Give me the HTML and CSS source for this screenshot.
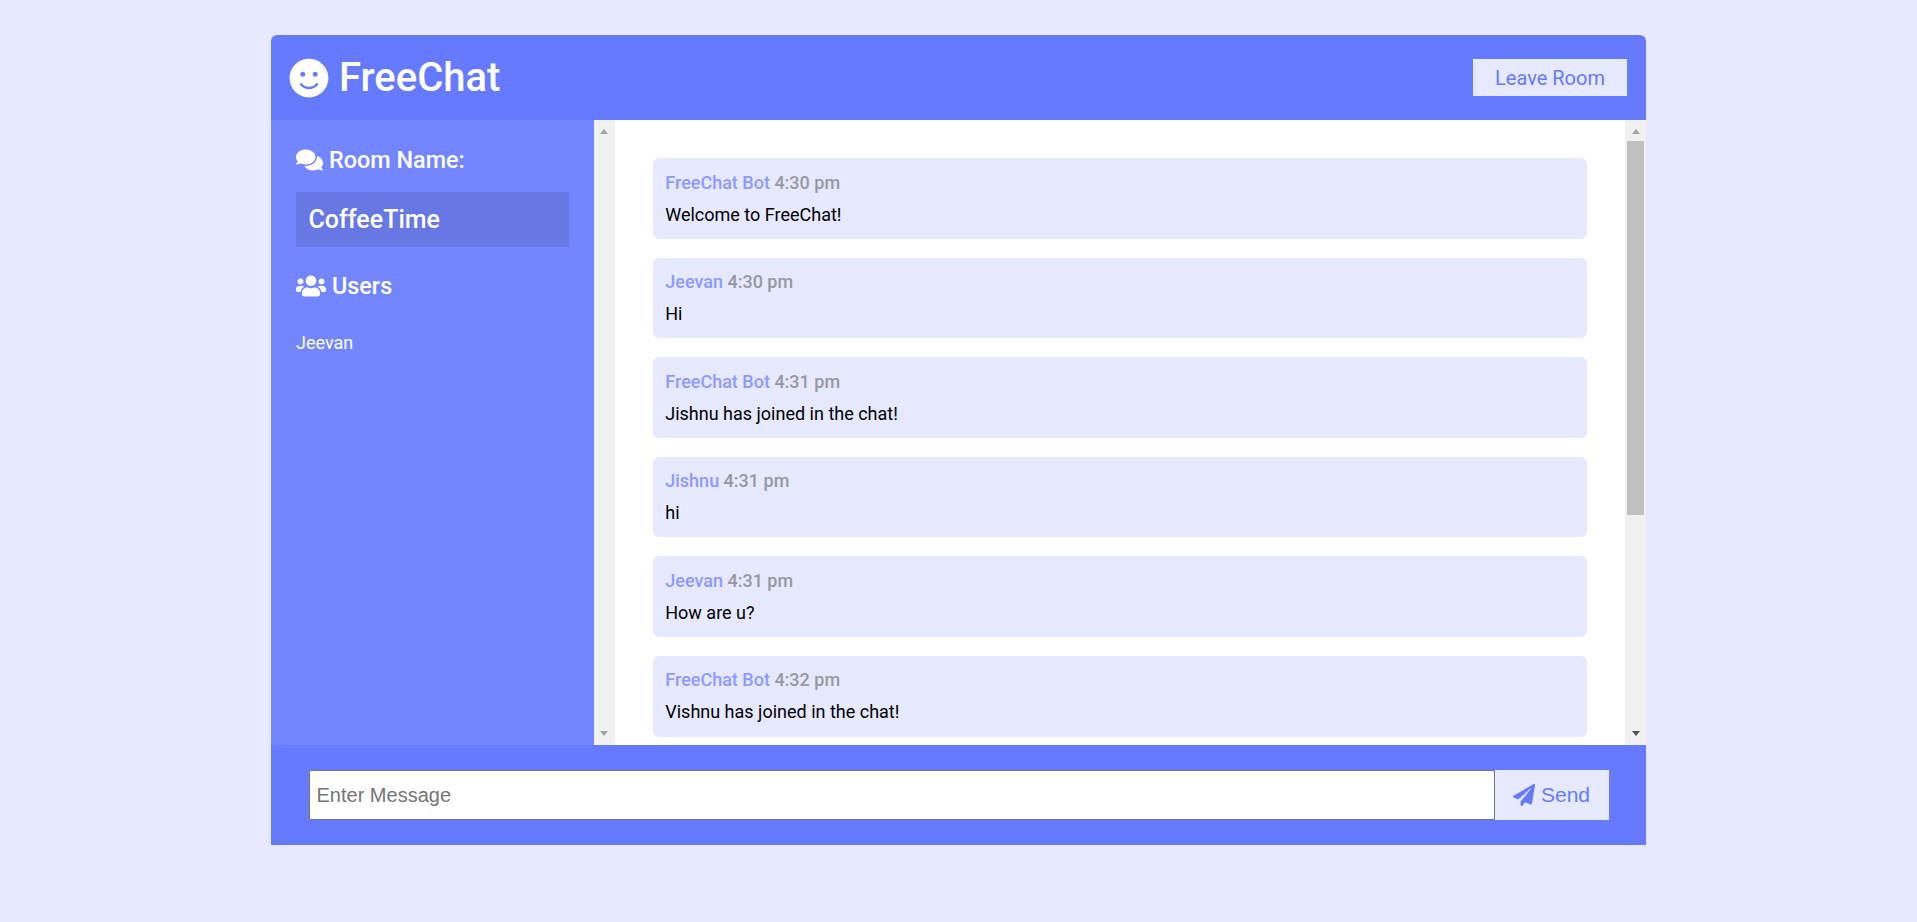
FILE: index.html
```html
<!DOCTYPE html>
<html lang="en">
<head>
<meta charset="utf-8">
<title>FreeChat</title>
<link rel="stylesheet" href="styles.css">
</head>
<body>
<div class="chat-container">
  <header class="chat-header">
    <h1 class="brand">
      <svg class="brand-icon" viewBox="0 0 496 512"><path d="M248 8C111 8 0 119 0 256s111 248 248 248 248-111 248-248S385 8 248 8zm80 168c17.7 0 32 14.3 32 32s-14.3 32-32 32-32-14.3-32-32 14.3-32 32-32zm-160 0c17.7 0 32 14.3 32 32s-14.3 32-32 32-32-14.3-32-32 14.3-32 32-32zm194.8 170.2C334.3 380.4 292.5 400 248 400s-86.3-19.6-114.8-53.8c-13.6-16.3 11-36.7 24.6-20.5 22.4 26.9 55.2 42.2 90.2 42.2s67.8-15.4 90.2-42.2c13.4-16.2 38.1 4.2 24.6 20.5z"/></svg>
      <span>FreeChat</span>
    </h1>
    <a class="btn leave-btn">Leave Room</a>
  </header>
  <main class="chat-main">
    <div class="pane sidebar-pane">
      <aside class="sidebar">
        <h3 class="side-title room-title">
          <svg class="side-icon comments" viewBox="0 0 576 512"><path d="M416 192c0-88.4-93.1-160-208-160S0 103.6 0 192c0 34.3 14.1 65.9 38 92-13.4 30.2-35.5 54.2-35.8 54.5-2.2 2.3-2.8 5.7-1.5 8.7S4.8 352 8 352c36.6 0 66.9-12.3 88.7-25 32.2 15.7 70.3 25 111.3 25 114.9 0 208-71.6 208-160zm122 220c23.9-26 38-57.7 38-92 0-66.9-53.5-124.2-129.3-148.1.9 6.6 1.3 13.3 1.3 20.1 0 105.9-107.7 192-240 192-10.8 0-21.3-.8-31.7-1.9C207.8 439.6 281.8 480 368 480c41 0 79.1-9.2 111.3-25 21.8 12.7 52.1 25 88.7 25 3.2 0 6.1-1.9 7.3-4.8 1.3-2.9.7-6.3-1.5-8.7-.3-.3-22.4-24.2-35.8-54.5z"/></svg>
          Room Name:
        </h3>
        <h2 class="room-name">CoffeeTime</h2>
        <h3 class="side-title users-title">
          <svg class="side-icon users" viewBox="0 0 640 512"><path d="M96 224c35.3 0 64-28.7 64-64s-28.7-64-64-64-64 28.7-64 64 28.7 64 64 64zm448 0c35.3 0 64-28.7 64-64s-28.7-64-64-64-64 28.7-64 64 28.7 64 64 64zm32 32h-64c-17.6 0-33.5 7.1-45.1 18.6 40.3 22.1 68.9 62 75.1 109.4h66c17.7 0 32-14.3 32-32v-32c0-35.3-28.7-64-64-64zm-256 0c61.9 0 112-50.1 112-112S381.9 32 320 32 208 82.1 208 144s50.1 112 112 112zm76.8 32h-8.3c-20.8 10-43.9 16-68.5 16s-47.6-6-68.5-16h-8.3C179.6 288 128 339.6 128 403.2V432c0 26.5 21.5 48 48 48h288c26.5 0 48-21.5 48-48v-28.8c0-63.6-51.6-115.2-115.2-115.2zm-223.7-13.4C161.5 263.1 145.6 256 128 256H64c-35.3 0-64 28.7-64 64v32c0 17.7 14.3 32 32 32h65.9c6.3-47.4 34.9-87.3 75.2-109.4z"/></svg>
          Users
        </h3>
        <ul class="user-list">
          <li>Jeevan</li>
        </ul>
      </aside>
      <div class="scrollbar">
        <span class="arrow up"></span>
        <span class="arrow down"></span>
      </div>
    </div>
    <div class="pane messages-pane">
      <section class="messages">
        <article class="message"><p class="meta">FreeChat Bot <span>4:30 pm</span></p><p class="text">Welcome to FreeChat!</p></article>
        <article class="message"><p class="meta">Jeevan <span>4:30 pm</span></p><p class="text">Hi</p></article>
        <article class="message"><p class="meta">FreeChat Bot <span>4:31 pm</span></p><p class="text">Jishnu has joined in the chat!</p></article>
        <article class="message"><p class="meta">Jishnu <span>4:31 pm</span></p><p class="text">hi</p></article>
        <article class="message"><p class="meta">Jeevan <span>4:31 pm</span></p><p class="text">How are u?</p></article>
        <article class="message"><p class="meta">FreeChat Bot <span>4:32 pm</span></p><p class="text">Vishnu has joined in the chat!</p></article>
      </section>
      <div class="scrollbar">
        <span class="arrow up"></span>
        <span class="thumb"></span>
        <span class="arrow down dark"></span>
      </div>
    </div>
  </main>
  <footer class="chat-form">
    <form class="form-row">
      <input class="msg-input" type="text" placeholder="Enter Message">
      <button class="btn send-btn" type="button">
        <svg class="send-icon" viewBox="0 0 512 512"><path d="M476 3.2L12.5 270.6c-18.1 10.4-15.8 35.6 2.2 43.2L121 358.4l287.3-253.2c5.5-4.9 13.3 2.6 8.6 8.3L176 407v80.5c0 23.6 28.5 32.9 42.5 15.8L282 426l124.6 52.2c14.2 6 30.4-2.9 33-18.2l72-432C515 7.8 493.3-6.8 476 3.2z"/></svg>
        Send
      </button>
    </form>
  </footer>
</div>
</body>
</html>
```

FILE: styles.css
```css
* { box-sizing: border-box; margin: 0; padding: 0; }

body {
  background: #e6e9ff;
  font-family: Roboto, sans-serif;
  font-size: 18px;
  padding-top: 35px;
  height: 922px;
  overflow: hidden;
}

.chat-container {
  width: 1375px;
  margin: 0 auto;
  color: #fff;
}

.chat-header {
  height: 85px;
  padding: 0 19px 0 18px;
  background: #667aff;
  border-radius: 6px 6px 0 0;
  display: flex;
  align-items: center;
  justify-content: space-between;
}

.brand {
  display: flex;
  align-items: center;
  gap: 10px;
  font-size: 40px;
  font-weight: 500;
}

.brand-icon { width: 40px; height: 40px; fill: #fff; }

.btn {
  background: #e6e9ff;
  color: #667aff;
  border: 0;
  display: flex;
  align-items: center;
  justify-content: center;
}

.leave-btn {
  width: 154px;
  height: 37px;
  font-size: 20px;
}

.chat-main {
  height: 625px;
  display: grid;
  grid-template-columns: 343.75px 1fr;
  background: #fff;
}

.pane { display: flex; min-height: 0; overflow: hidden; }

.sidebar {
  flex: 1;
  background: #7386ff;
  padding: 25px;
}

.side-title {
  display: flex;
  align-items: center;
  gap: 6px;
  font-size: 23.4px;
  font-weight: 500;
  line-height: 30px;
}

.side-icon { fill: #fff; height: 24px; flex: none; }
.comments { width: 27px; }
.users { width: 30px; }

.room-name {
  margin-top: 17px;
  height: 55px;
  padding: 0 12.5px;
  line-height: 55px;
  font-size: 25px;
  font-weight: 500;
  background: rgba(0, 0, 0, 0.1);
}

.users-title { margin-top: 24px; }

.user-list { list-style: none; margin-top: 19px; }
.user-list li { padding: 12.5px 0; line-height: 20px; }

.scrollbar {
  flex: none;
  width: 21px;
  padding: 9px 0;
  background: #f1f1f1;
  display: flex;
  flex-direction: column;
  align-items: center;
  justify-content: space-between;
}

.arrow { width: 0; height: 0; border-left: 4.5px solid transparent; border-right: 4.5px solid transparent; }
.arrow.up { border-bottom: 5px solid #a3a3a3; }
.arrow.down { border-top: 5px solid #a3a3a3; }
.arrow.dark { border-top-color: #505050; }

.thumb {
  width: 17px;
  height: 374px;
  margin: 7px 0 auto;
  background: #c1c1c1;
}

.messages {
  flex: 1;
  padding: 38px;
  overflow: hidden;
}

.message {
  height: 80.6px;
  margin-bottom: 19px;
  padding: 12.5px;
  background: #e6e9ff;
  border-radius: 6px;
}

.meta {
  font-size: 18px;
  font-weight: 500;
  line-height: 23px;
  color: #667aff;
  opacity: 0.7;
  margin-bottom: 9px;
}

.meta span { color: #777; }

.text { font-size: 18px; line-height: 23px; color: #000; }

.chat-form {
  height: 100px;
  background: #667aff;
  padding: 25px 37.5px;
}

.form-row { display: flex; height: 50px; }

.msg-input {
  flex: 1;
  min-width: 0;
  padding: 0 7px;
  border: 1.5px solid #767676;
  border-radius: 2px;
  font-family: "Liberation Sans", Arial, sans-serif;
  font-size: 20px;
}

.msg-input::placeholder { color: #757575; }

.send-btn {
  width: 114px;
  gap: 6px;
  font-family: "Liberation Sans", Arial, sans-serif;
  font-size: 21px;
}

.send-icon { width: 22px; height: 22px; fill: #667aff; }
```
